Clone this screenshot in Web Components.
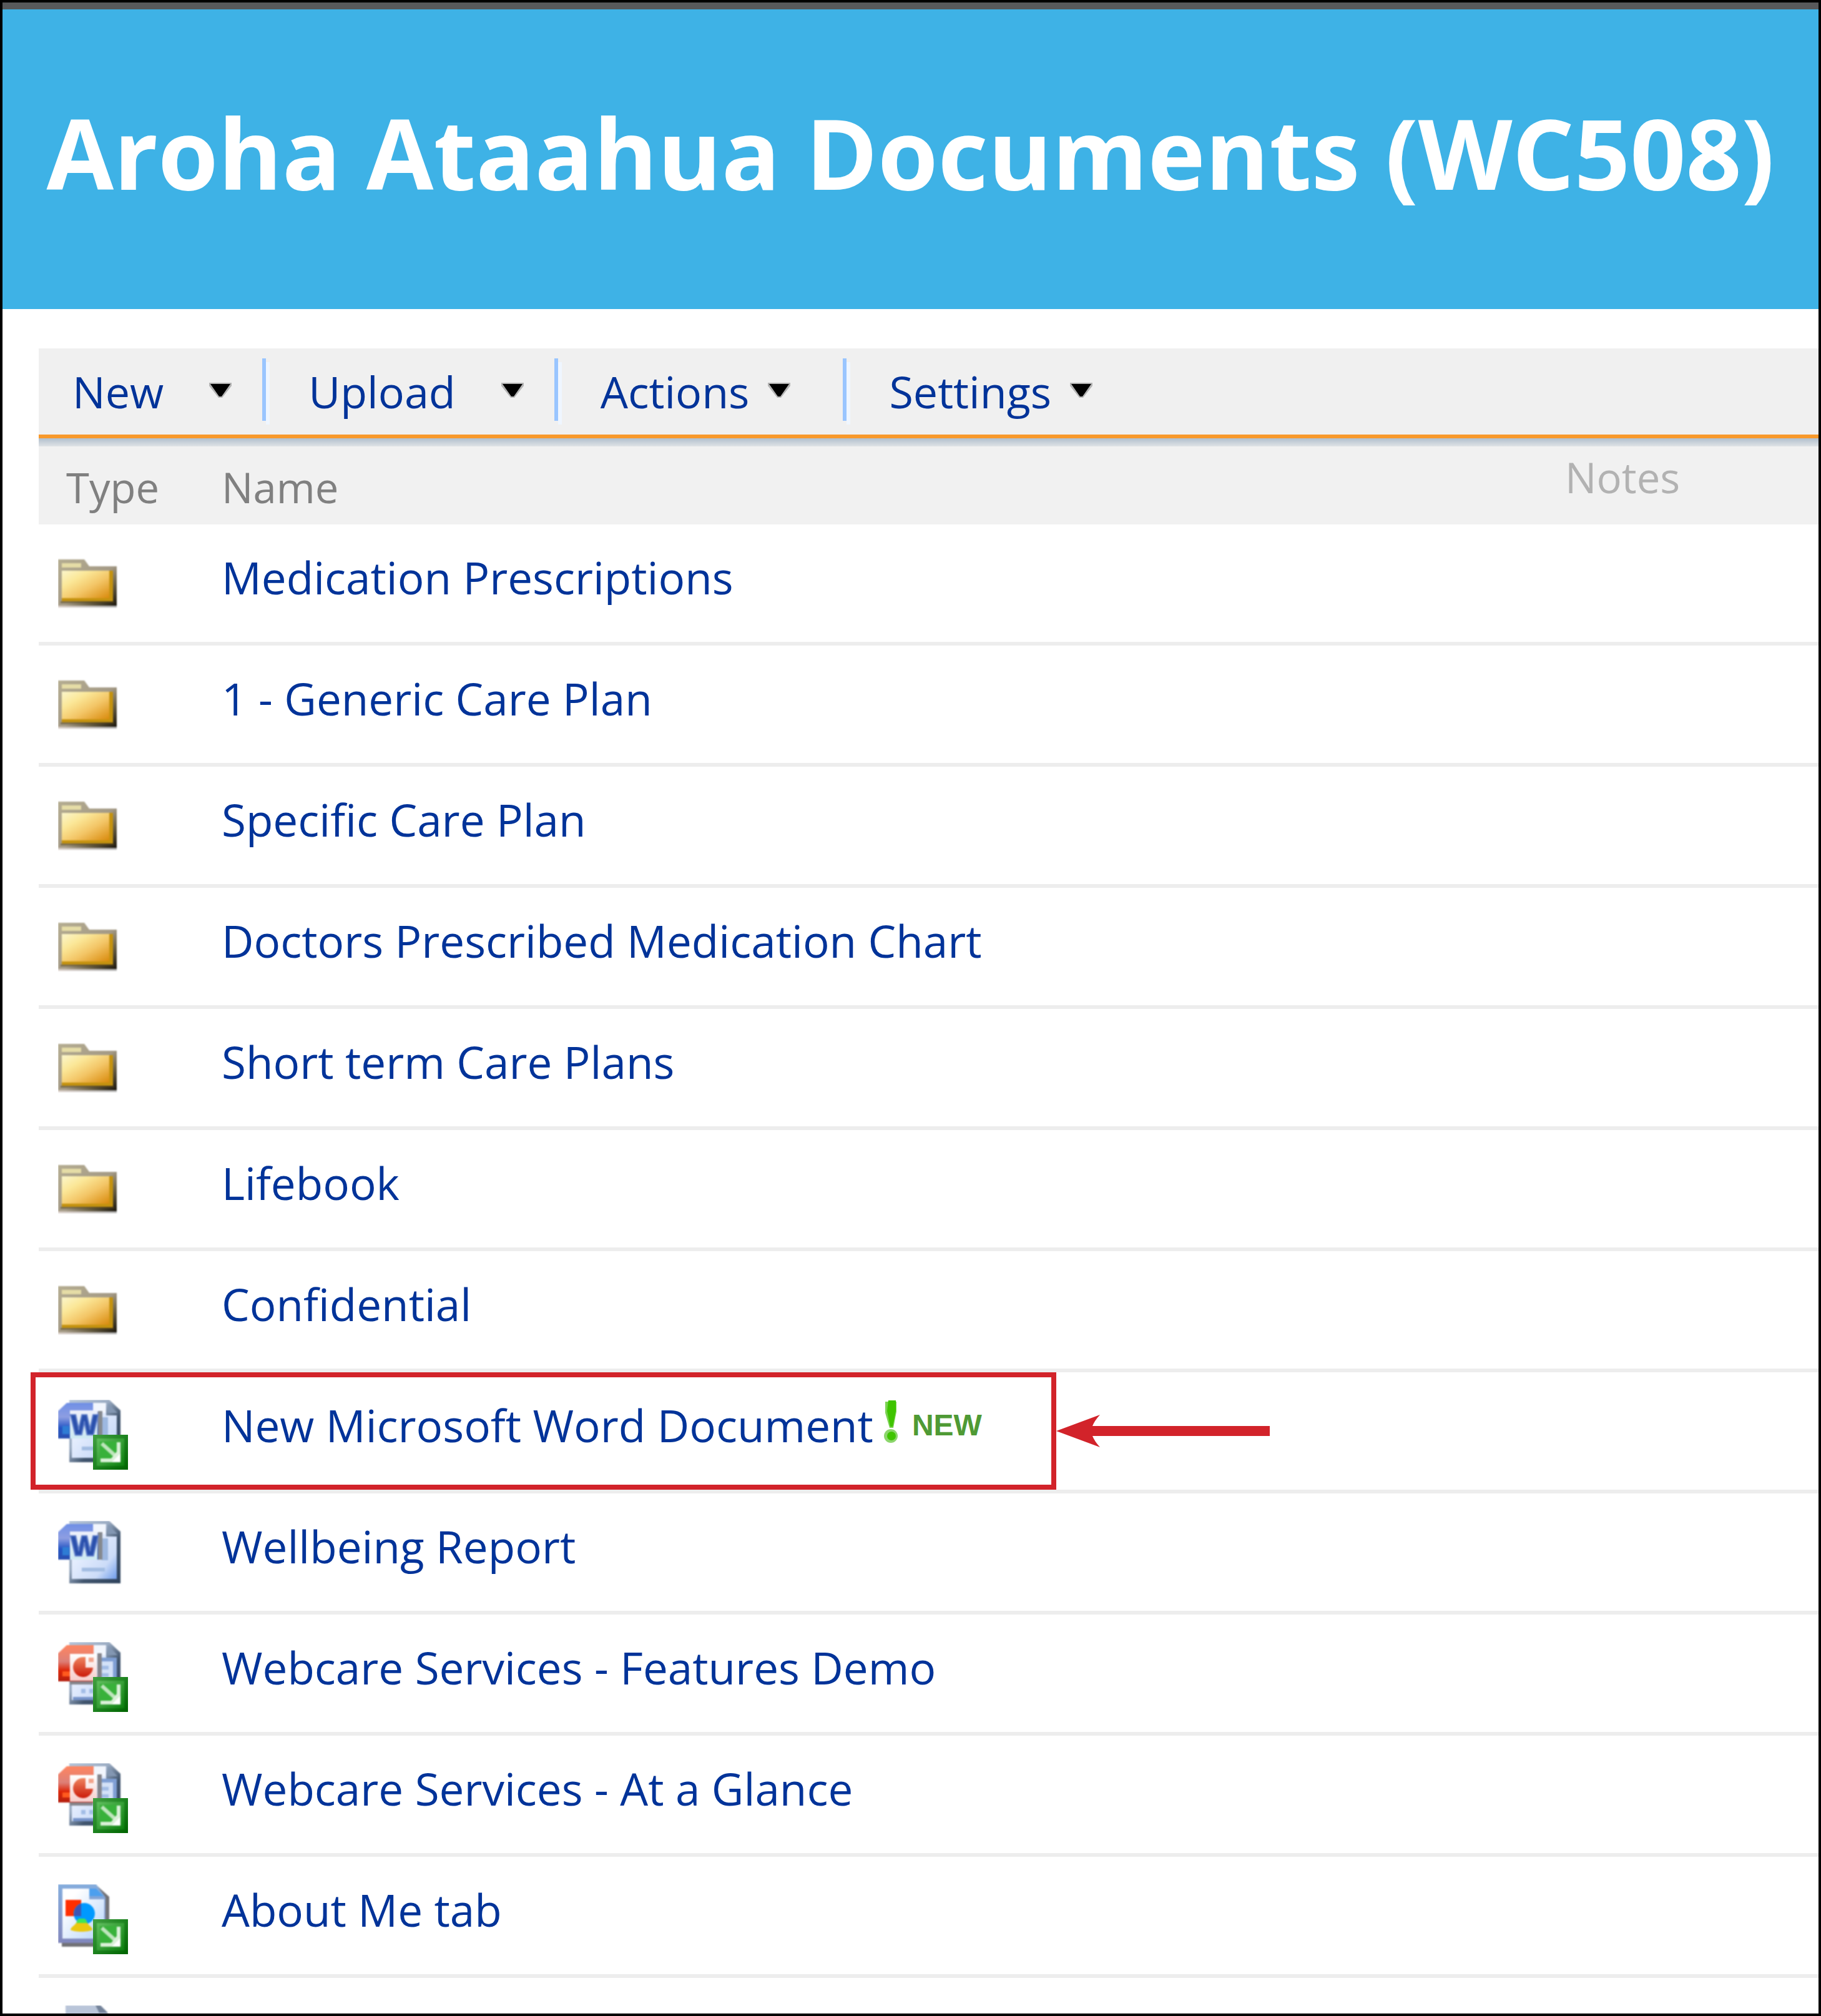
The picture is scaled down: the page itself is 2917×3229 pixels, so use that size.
<!DOCTYPE html>
<html lang="en">
<head>
<meta charset="utf-8">
<title>Aroha Ataahua Documents (WC508)</title>
<style>
  body {
    margin: 0;
    background: #fff;
    font-family: "Open Sans", "Segoe UI", sans-serif;
  }
</style>
</head>
<body>
<doc-frame>
  <page-banner slot="banner">Aroha Ataahua Documents (WC508)</page-banner>
  <tool-bar>
    <menu-button spread>New</menu-button>
    <menu-button spread>Upload</menu-button>
    <menu-button wide>Actions</menu-button>
    <menu-button last>Settings</menu-button>
  </tool-bar>
  <doc-list></doc-list>
</doc-frame>

<script>
function makeTemplate(html) {
  const template = document.createElement('template');
  template.innerHTML = html;
  return template;
}

class BaseElement extends HTMLElement {
  constructor() {
    super();
    this.attachShadow({ mode: 'open' });
    this.shadowRoot.appendChild(this.constructor.template.content.cloneNode(true));
  }
}

class DocFrame extends BaseElement {
  static template = makeTemplate(`
    <style>
      :host {
        display: flex;
        flex-direction: column;
        box-sizing: border-box;
        height: 100vh;
        overflow: hidden;
        border: 4px solid #000;
      }
      main {
        padding: 63px 0 0 58px;
      }
    </style>
    <slot name="banner"></slot>
    <main><slot></slot></main>
  `);
}

class PageBanner extends BaseElement {
  static template = makeTemplate(`
    <style>
      :host {
        display: flex;
        flex-shrink: 0;
        justify-content: center;
        border-top: 11px solid #58595b;
        background: #3eb2e6;
        color: #fff;
      }
      h1 {
        margin: 0;
        padding: 121px 0 143px;
        font-size: 156px;
        line-height: 216px;
        font-weight: 700;
        white-space: nowrap;
      }
    </style>
    <h1><slot></slot></h1>
  `);
}

class ToolBar extends BaseElement {
  static template = makeTemplate(`
    <style>
      :host {
        display: block;
        border-bottom: 6px solid #f8992b;
        background: #f0f0f0;
      }
      nav {
        display: flex;
        height: 138px;
      }
    </style>
    <nav aria-label="Library actions"><slot></slot></nav>
  `);
}

class MenuButton extends BaseElement {
  static template = makeTemplate(`
    <style>
      :host {
        display: flex;
      }
      button {
        display: flex;
        align-items: center;
        gap: 30px;
        margin: 0;
        padding: 0 49px 0 62px;
        border: 0;
        background: none;
        color: #003399;
        font: inherit;
        font-size: 70px;
        line-height: 90px;
        cursor: pointer;
      }
      svg { margin-bottom: 6px; }
      :host(:first-child) button { padding-left: 54px; }
      :host([spread]) button { gap: 73px; }
      :host([wide]) button { padding-right: 84px; }
      .divider {
        width: 6px;
        height: 100px;
        margin: 16px 6px 0 0;
        background: #99c5ff;
        box-shadow: 6px 6px 0 #eff6ff;
      }
      :host([last]) .divider { display: none; }
    </style>
    <button type="button" aria-haspopup="menu">
      <slot></slot>
      <svg width="36" height="26" viewBox="0 0 36 26" aria-hidden="true">
        <path d="M0 2h36v5L21 26h-6L0 7z" fill="#777" opacity=".5"/>
        <path d="M2 4h32L20 24h-4z" fill="#000"/>
      </svg>
    </button>
    <span class="divider"></span>
  `);
}

// Office page shared by the Word and PowerPoint icons
const sheet = `
  <path d="M18 0h64l18 17v83H18z" fill="url(#edge)"/>
  <path d="M22 5h55v20h17v68H22z" fill="url(#paper)"/>
  <path d="M57 5h19v16H57z" fill="#f2f6fd"/>
  <path d="M80 5l15 16H80z" fill="#8397b2"/>`;

const officeDefs = `
  <linearGradient id="edge" x1="0" y1="0" x2="1" y2="1">
    <stop offset="0" stop-color="#b4c4da"/><stop offset=".4" stop-color="#9aabc2"/>
    <stop offset=".62" stop-color="#42566f"/><stop offset="1" stop-color="#2f435c"/>
  </linearGradient>
  <linearGradient id="paper" x1="0" y1="0" x2="1" y2="1">
    <stop offset=".3" stop-color="#e9f0ff"/><stop offset=".75" stop-color="#ccdcf8"/>
    <stop offset="1" stop-color="#6f9cea"/>
  </linearGradient>`;

const artwork = {
  folder: `
    <defs>
      <linearGradient id="rim" x1="0" y1="0" x2="1" y2="1">
        <stop offset="0" stop-color="#b5ad91"/><stop offset=".55" stop-color="#a49a86"/>
        <stop offset=".75" stop-color="#6a6045"/><stop offset="1" stop-color="#17130a"/>
      </linearGradient>
      <linearGradient id="fill" x1="0" y1="0" x2="1" y2="1">
        <stop offset="0" stop-color="#fbf6cb"/><stop offset=".3" stop-color="#fbe798"/>
        <stop offset=".6" stop-color="#f3c566"/><stop offset="1" stop-color="#d98a0c"/>
      </linearGradient>
      <linearGradient id="base" x1="0" y1="0" x2="1" y2="0">
        <stop offset="0" stop-color="#d8cdc6"/><stop offset="1" stop-color="#b0b0b0"/>
      </linearGradient>
    </defs>
    <path d="M0 84h94v5H0z" fill="url(#base)"/>
    <path d="M0 12h42l8 11h44v63H0z" fill="url(#rim)"/>
    <path d="M6 18h31v7H6z" fill="#e5dca6"/>
    <path d="M6 30h82v49H6z" fill="#c4920f"/>
    <path d="M6 30h76v44H6z" fill="url(#fill)"/>
    <path d="M4 79h86v3H4z" fill="#50401a" opacity=".5"/>`,
  word: `
    <defs>${officeDefs}
      <linearGradient id="brand" x1="0" y1="0" x2="0" y2="1">
        <stop offset="0" stop-color="#6f8fe6"/><stop offset=".4" stop-color="#8e9ee2"/>
        <stop offset=".7" stop-color="#2454c4"/><stop offset="1" stop-color="#2a50b0"/>
      </linearGradient>
      <linearGradient id="plate" x1="0" y1="0" x2="0" y2="1">
        <stop offset="0" stop-color="#eef0fb"/><stop offset="1" stop-color="#cdeaf2"/>
      </linearGradient>
    </defs>
    ${sheet}
    <path d="M70 28h10v35H70z" fill="#9db8e0"/>
    <path d="M38 75h37v6H38z" fill="#a3bde2"/>
    <path d="M19 62h52V18h-7v38H19z" fill="#85898f"/>
    <path d="M0 18L14 5h42v14h8v43H0z" fill="url(#brand)"/>
    <path d="M7 42h11v13H7z" fill="#2e7cd4"/>
    <path d="M19 17h44v45H19z" fill="url(#plate)"/>
    <text x="42" y="56" text-anchor="middle" font-family="Open Sans, sans-serif" font-size="44" font-weight="800" fill="#2a50ac" stroke="#5d7cc8" stroke-width="2">W</text>`,
  powerpoint: `
    <defs>${officeDefs}
      <linearGradient id="brand" x1="0" y1="0" x2="0" y2="1">
        <stop offset="0" stop-color="#ff8560"/><stop offset=".45" stop-color="#dd8078"/>
        <stop offset=".7" stop-color="#dd2508"/><stop offset="1" stop-color="#b42010"/>
      </linearGradient>
      <linearGradient id="plate" x1="0" y1="0" x2="0" y2="1">
        <stop offset="0" stop-color="#fff"/><stop offset="1" stop-color="#f7cdcb"/>
      </linearGradient>
      <linearGradient id="pie" x1="0" y1="0" x2="0" y2="1">
        <stop offset="0" stop-color="#ee8560"/><stop offset="1" stop-color="#cc1a0a"/>
      </linearGradient>
    </defs>
    ${sheet}
    <path d="M70 25h24v33H70z" fill="#7f9fd4"/>
    <path d="M70 31h18v27H70z" fill="#d3e1f7"/>
    <path d="M70 38h11v6H70zM70 50h11v6H70zM37 75h7v7h-7zM50 75h7v7h-7z" fill="#a3bde6"/>
    <path d="M24 88h68v5H24z" fill="#7895cb"/>
    <path d="M19 62h51V18h-7v38H19z" fill="#85858c"/>
    <path d="M19 62h37v6H19z" fill="#85858c"/>
    <path d="M0 18L14 5h43v14h5v44H0z" fill="url(#brand)"/>
    <path d="M7 47h12v8H7z" fill="#ff5a1e"/>
    <path d="M19 19h43v43H19z" fill="url(#plate)"/>
    <path d="M39 24a16 16 0 1 0 17 17H44V24z" fill="url(#pie)"/>
    <path d="M49 25h8v7h-8z" fill="#f3a48c"/>`,
  image: `
    <defs>
      <linearGradient id="trim" x1="0" y1="0" x2="0" y2="1">
        <stop offset="0" stop-color="#85addd"/><stop offset="1" stop-color="#8187bd"/>
      </linearGradient>
      <linearGradient id="glow" x1="0" y1="0" x2="1" y2="1">
        <stop offset=".2" stop-color="#fff"/><stop offset="1" stop-color="#b6d4fa"/>
      </linearGradient>
    </defs>
    <path d="M6 6h57V3l19 17v80H6z" fill="#727276"/>
    <path d="M0 0h61l15 21v73H0z" fill="url(#trim)"/>
    <path d="M7 7h43v17h24v63H7z" fill="url(#glow)"/>
    <path d="M50 7h11l12 12H50z" fill="#4d9fee"/>
    <path d="M12 25h25v26H12z" fill="#ff2e00"/>
    <circle cx="42" cy="47" r="17" fill="#0099ff"/>
    <path d="M27 40a17 17 0 0 1 10-9v20H25z" fill="#3d55b4"/>
    <path d="M20 73c0-5 10-8 11-16h14c1 8 10 11 10 16-6 4-29 4-35 0z" fill="#eac810"/>
    <path d="M30 60l3-5h10l4 7H29z" fill="#3ce65a"/>`,
  page: `<defs>${officeDefs}</defs>
    <path d="M12 0h54l18 17v83H12z" fill="#b9c5d9"/>
    <path d="M60 0h8l12 12H66z" fill="#74839a"/>`
};

const shortcut = `
  <linearGradient id="green" x1="0" y1="0" x2="1" y2="1">
    <stop offset="0" stop-color="#42a042"/><stop offset=".5" stop-color="#1d831f"/>
    <stop offset="1" stop-color="#006400"/>
  </linearGradient>
  <linearGradient id="leaf" x1="0" y1="0" x2="1" y2="1">
    <stop offset="0" stop-color="#62bf60"/><stop offset="1" stop-color="#0c800e"/>
  </linearGradient>
  <path d="M56 56h56v56H56z" fill="url(#green)"/>
  <g class="soft">
    <path d="M62 62h44v44H62z" fill="url(#leaf)"/>
    <path d="M67 67h33v33H67z" fill="#38b13a"/>
    <path d="M70 70l22 20" stroke="#bfe5bd" stroke-width="6"/>
    <path d="M94 68h6v32H68v-6h17l9-11z" fill="#daf0d8"/>
    <path d="M100 86v14H86z" fill="#fff"/>
  </g>`;

class DocIcon extends HTMLElement {
  constructor() {
    super();
    this.attachShadow({ mode: 'open' });
  }

  connectedCallback() {
    this.shadowRoot.innerHTML = `
      <style>
        :host { display: block; }
        svg { display: block; }
        .soft { filter: blur(1px); }
      </style>
      <svg width="112" height="112" viewBox="0 0 112 112" aria-hidden="true">
        <g class="soft">${artwork[this.getAttribute('type')]}</g>
        ${this.hasAttribute('shortcut') ? shortcut : ''}
      </svg>
    `;
  }
}

class NewBadge extends BaseElement {
  static template = makeTemplate(`
    <style>
      :host {
        display: flex;
        align-items: center;
        gap: 20px;
        color: #4f9a35;
        font: 700 48px/60px "Liberation Sans", Arial, sans-serif;
      }
      svg { margin-bottom: 10px; }
    </style>
    <svg width="26" height="70" viewBox="0 0 26 70" aria-hidden="true">
      <path d="M3 2h18v16l-5 26h-6L3 20z" fill="#7bd352"/>
      <path d="M8 0h12v17l-5 25h-4L6 17z" fill="#3fc400"/>
      <circle cx="12" cy="57" r="11" fill="#8cd66c"/>
      <circle cx="13" cy="57" r="7" fill="#3fc400"/>
    </svg>
    <span>NEW</span>
  `);
}

// Red outline and arrow laid over a row
class RowCallout extends BaseElement {
  static template = makeTemplate(`
    <style>
      :host {
        position: absolute;
        top: 0;
        left: -13px;
        display: flex;
        align-items: center;
        pointer-events: none;
      }
      .box {
        box-sizing: border-box;
        width: 1643px;
        height: 188px;
        border: 8px solid #d2232a;
      }
    </style>
    <div class="box"></div>
    <svg width="342" height="52" viewBox="0 0 342 52" aria-hidden="true">
      <path d="M0 26L70 0Q61 10 58 18H342V34H58Q61 42 70 52z" fill="#d2232a"/>
    </svg>
  `);
}

const documents = [
  { name: 'Medication Prescriptions', type: 'folder' },
  { name: '1 - Generic Care Plan', type: 'folder' },
  { name: 'Specific Care Plan', type: 'folder' },
  { name: 'Doctors Prescribed Medication Chart', type: 'folder' },
  { name: 'Short term Care Plans', type: 'folder' },
  { name: 'Lifebook', type: 'folder' },
  { name: 'Confidential', type: 'folder' },
  { name: 'New Microsoft Word Document', type: 'word', shortcut: true, isNew: true, marked: true },
  { name: 'Wellbeing Report', type: 'word' },
  { name: 'Webcare Services - Features Demo', type: 'powerpoint', shortcut: true },
  { name: 'Webcare Services - At a Glance', type: 'powerpoint', shortcut: true },
  { name: 'About Me tab', type: 'image', shortcut: true },
  { name: '', type: 'page' }
];

class DocList extends BaseElement {
  static template = makeTemplate(`
    <style>
      :host { display: block; }
      table {
        width: 100%;
        border-collapse: separate;
        border-spacing: 0;
        table-layout: fixed;
      }
      th, td {
        box-sizing: border-box;
        padding: 0;
        text-align: left;
        vertical-align: top;
      }
      thead {
        background: linear-gradient(#b1bfcd, #dfe3e6 13px, #f1f1f1 13px);
      }
      th {
        height: 138px;
        padding-top: 33px;
        color: #808080;
        font-size: 67px;
        line-height: 90px;
        font-weight: 400;
      }
      .type { width: 293px; padding-left: 44px; }
      .notes { width: 406px; padding-top: 17px; color: #b2b2b2; }
      tbody tr { position: relative; }
      td {
        height: 194px;
        border-bottom: 6px solid #ededed;
      }
      td:first-child { padding: 44px 0 0 31px; }
      .name {
        display: flex;
        gap: 16px;
        padding-top: 35px;
        white-space: nowrap;
      }
      a {
        color: #003399;
        font-size: 71px;
        line-height: 100px;
        text-decoration: none;
      }
      new-badge { height: 100px; }
    </style>
    <table>
      <thead>
        <tr>
          <th class="type" scope="col">Type</th>
          <th scope="col">Name</th>
          <th class="notes" scope="col">Notes</th>
        </tr>
      </thead>
      <tbody></tbody>
    </table>
  `);

  connectedCallback() {
    const body = this.shadowRoot.querySelector('tbody');
    documents.forEach((doc) => {
      const row = document.createElement('tr');
      row.innerHTML = `
        <td><doc-icon type="${doc.type}" ${doc.shortcut ? 'shortcut' : ''}></doc-icon></td>
        <td>
          <div class="name">
            ${doc.name ? `<a href="#">${doc.name}</a>` : ''}
            ${doc.isNew ? '<new-badge></new-badge>' : ''}
          </div>
        </td>
        <td>${doc.marked ? '<row-callout></row-callout>' : ''}</td>
      `;
      body.appendChild(row);
    });
  }
}

customElements.define('doc-frame', DocFrame);
customElements.define('page-banner', PageBanner);
customElements.define('tool-bar', ToolBar);
customElements.define('menu-button', MenuButton);
customElements.define('doc-icon', DocIcon);
customElements.define('new-badge', NewBadge);
customElements.define('row-callout', RowCallout);
customElements.define('doc-list', DocList);
</script>
</body>
</html>
